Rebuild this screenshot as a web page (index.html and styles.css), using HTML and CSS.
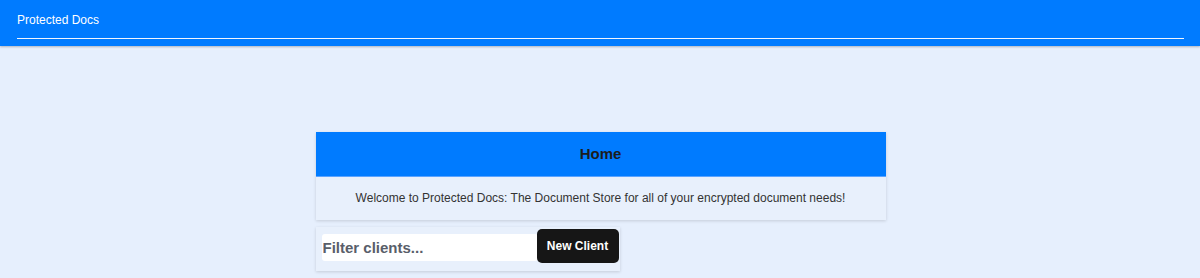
FILE: index.html
```html
<!DOCTYPE html>
<html>
<head>
  <title>Protected Docs</title>
  <link rel="stylesheet" href="styles.css">
</head>
<body>
  <header class="topbar">
    <div class="brand">Protected Docs</div>
    <div class="topbar-rule"></div>
  </header>

  <main class="page">
    <section class="home-card">
      <h1 class="home-title">Home</h1>
      <p class="home-welcome">Welcome to Protected Docs: The Document Store for all of your encrypted document needs!</p>
    </section>

    <div class="client-bar">
      <input class="client-filter" type="text" placeholder="Filter clients...">
      <button class="new-client">New Client</button>
    </div>
  </main>
</body>
</html>
```

FILE: styles.css
```css
body {
  margin: 0;
  font-family: "Liberation Sans", Arial, sans-serif;
  background-color: #e6effd;
  min-height: 100vh;
}

.topbar {
  background-color: #007bff;
  height: 46px;
  padding: 0 16px 0 17px;
  box-sizing: border-box;
  box-shadow: 0 1px 2px rgba(0, 0, 0, 0.25);
}

.brand {
  color: #fff;
  font-size: 12px;
  padding-top: 13px;
  line-height: 14px;
}

.topbar-rule {
  margin-top: 11px;
  height: 1px;
  background-color: #f2f6ff;
}

.page {
  width: 570px;
  margin: 86px auto 0;
  padding-left: 1px;
}

.home-card {
  box-shadow: 0 1px 3px rgba(0, 0, 0, 0.15);
}

.home-title {
  margin: 0;
  height: 44px;
  line-height: 44px;
  background-color: #007bff;
  color: #1c1c1c;
  font-size: 15px;
  font-weight: bold;
  text-align: center;
  border-bottom: 1px solid #5aa3ff;
}

.home-welcome {
  margin: 0;
  height: 43px;
  line-height: 42px;
  background-color: #e8f0fc;
  color: #333;
  font-size: 12px;
  text-align: center;
}

.client-bar {
  display: flex;
  align-items: center;
  width: 304px;
  margin-top: 7px;
  padding: 2px 1px 8px 6px;
  box-sizing: border-box;
  background-color: #e8f0fc;
  box-shadow: 0 1px 3px rgba(0, 0, 0, 0.15);
}

.client-filter {
  width: 216px;
  height: 27px;
  margin-top: 3px;
  padding: 0 1px;
  box-sizing: border-box;
  border: none;
  border-radius: 3px;
  background-color: #fff;
  font-family: inherit;
  font-size: 15px;
  font-weight: bold;
  color: #333;
}

.client-filter::placeholder {
  color: #595e6a;
}

.new-client {
  width: 82px;
  height: 34px;
  margin-left: -1px;
  border: none;
  border-radius: 5px;
  background-color: #161616;
  color: #fff;
  font-family: inherit;
  font-size: 12px;
  font-weight: bold;
}
```
